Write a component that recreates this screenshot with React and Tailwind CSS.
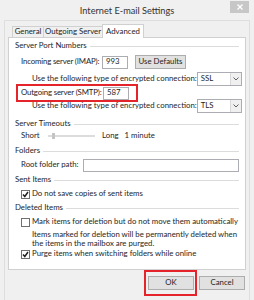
import { useState } from "react";

const font = { fontFamily: "Lato, 'Liberation Sans', sans-serif" };

// Section header with a rule running to the right edge
function Section({ title, className = "" }) {
  return (
    <div className={`flex items-center h-[12px] pl-[6px] pr-[6px] ${className}`}>
      <span className="text-[7.8px] leading-none text-[#1e1e1e] whitespace-nowrap">{title}</span>
      <div className="flex-1 h-px bg-[#dcdcdc] ml-[3px]" />
    </div>
  );
}

function Field({ value, className = "" }) {
  return (
    <div className={`shrink-0 h-[13px] bg-white border border-[#abadb3] flex items-center px-[3px] text-[7.8px] leading-none ${className}`}>
      {value}
    </div>
  );
}

function Select({ value }) {
  return (
    <div className="shrink-0 ml-auto mr-[6px] w-[45px] h-[14px] bg-white border border-[#abadb3] flex items-center">
      <span className="flex-1 pl-[3px] text-[7.8px] leading-none">{value}</span>
      <div className="w-[11px] h-full bg-[#f0f0f0] border-l border-[#d9d9d9] flex items-center justify-center">
        <svg width="6" height="4" viewBox="0 0 6 4">
          <path d="M0.5 0.5 L3 3 L5.5 0.5" fill="none" stroke="#606060" strokeWidth="1" />
        </svg>
      </div>
    </div>
  );
}

function Check({ checked, label, className = "" }) {
  return (
    <div className={`flex items-center h-[12px] pl-[12px] ${className}`}>
      <div className="shrink-0 w-[9px] h-[9px] bg-white border border-[#707070] flex items-center justify-center">
        {checked && (
          <svg width="7" height="7" viewBox="0 0 7 7">
            <path d="M1 3.5 L2.8 5.5 L6 1" fill="none" stroke="#222" strokeWidth="1.5" />
          </svg>
        )}
      </div>
      <span className="ml-[2px] text-[7.8px] leading-none whitespace-nowrap">{label}</span>
    </div>
  );
}

function Button({ children, className = "" }) {
  return (
    <div className={`shrink-0 w-[46px] h-[14px] bg-[#e1e1e1] border border-[#adadad] flex items-center justify-center text-[7.8px] leading-none ${className}`}>
      {children}
    </div>
  );
}

export default function App() {
  const [tab] = useState("Advanced");
  const tabs = [
    { name: "General", w: "w-[32px]" },
    { name: "Outgoing Server", w: "w-[60px]" },
    { name: "Advanced", w: "w-[42px]" },
  ];

  return (
    <div className="w-[254px] h-[300px] bg-[#f0f0f0] overflow-hidden text-[#1e1e1e]" style={font}>
      {/* title bar */}
      <div className="relative h-[20px] flex items-center justify-center">
        <span className="text-[9.2px] text-[#333] leading-none mt-[1px]">Internet E-mail Settings</span>
        <div className="absolute right-[5px] top-[1px] w-[19px] h-[12px] bg-[#c7c7c7] flex items-center justify-center">
          <svg width="6" height="6" viewBox="0 0 6 6">
            <path d="M0.5 0.5 L5.5 5.5 M5.5 0.5 L0.5 5.5" stroke="#fff" strokeWidth="1.3" />
          </svg>
        </div>
      </div>

      {/* client area */}
      <div className="mx-[4px] h-[290px] border border-[#dedede] bg-[#f0f0f0]">
        {/* tabs */}
        <div className="flex items-end h-[16px] pl-[7px]">
          {tabs.map((t) =>
            t.name === tab ? (
              <div key={t.name} className={`${t.w} h-[14px] -mb-px z-10 bg-white border border-b-0 border-[#d0d0d0] flex items-center justify-center text-[7.8px] leading-none`}>
                {t.name}
              </div>
            ) : (
              <div key={t.name} className={`${t.w} h-[11px] bg-[#f0f0f0] border border-b-0 border-[#d0d0d0] -mr-px flex items-center justify-center text-[7.8px] leading-none`}>
                {t.name}
              </div>
            )
          )}
        </div>

        {/* tab page */}
        <div className="mx-[3px] h-[233px] bg-white border border-[#d0d0d0]">
          <Section title="Server Port Numbers" className="mt-[2px]" />

          <div className="flex items-center h-[14px] mt-[3px] pl-[12px]">
            <span className="shrink-0 w-[81px] text-[7.8px] tracking-[-0.15px] leading-none whitespace-nowrap">Incoming server (IMAP):</span>
            <Field value="993" className="w-[26px]" />
            <Button className="ml-[7px] w-[51px]">Use Defaults</Button>
          </div>

          <div className="flex items-center h-[14px] mt-[3px] pl-[23px]">
            <span className="text-[7.8px] leading-none whitespace-nowrap">Use the following type of encrypted connection:</span>
            <Select value="SSL" />
          </div>

          <div className="flex items-center h-[12px] mt-px pl-[7px]">
            <div className="flex items-center h-[18px] border-2 border-[#e5232a] pl-[3px] pr-[7px]">
              <span className="shrink-0 w-[82px] text-[7.8px] tracking-[-0.15px] leading-none whitespace-nowrap">Outgoing server (SMTP):</span>
              <Field value="587" className="w-[26px]" />
            </div>
          </div>

          <div className="flex items-center h-[14px] pl-[23px]">
            <span className="text-[7.8px] leading-none whitespace-nowrap">Use the following type of encrypted connection:</span>
            <Select value="TLS" />
          </div>

          <Section title="Server Timeouts" className="mt-[5px]" />

          <div className="flex items-center h-[12px] pl-[12px] text-[7.8px] leading-none">
            <span className="w-[27px]">Short</span>
            <div className="relative w-[47px] h-[2px] bg-[#dcdcdc]">
              <div className="absolute left-[4px] -top-[2px] w-[3px] h-[6px] bg-[#c4c4c4]" />
            </div>
            <span className="ml-[7px]">Long</span>
            <span className="ml-[6px]">1 minute</span>
          </div>

          <Section title="Folders" className="mt-[3px]" />

          <div className="flex items-center h-[12px] mt-[2px] pl-[12px]">
            <span className="shrink-0 w-[62px] text-[7.8px] leading-none whitespace-nowrap">Root folder path:</span>
            <Field value="" className="flex-1 mr-[6px] h-[12px]" />
          </div>

          <Section title="Sent Items" className="mt-[3px]" />
          <Check checked label="Do not save copies of sent items" className="mt-[2px]" />

          <Section title="Deleted Items" className="mt-[2px]" />
          <Check label="Mark items for deletion but do not move them automatically" className="mt-[2px]" />

          <div className="mt-[2px] pl-[23px] text-[7.8px] leading-[9px] whitespace-nowrap">
            <div>Items marked for deletion will be permanently deleted when</div>
            <div>the items in the mailbox are purged.</div>
          </div>

          <Check checked label="Purge items when switching folders while online" />
        </div>

        {/* buttons */}
        <div className="flex items-start justify-end pr-[4px] gap-[2px]">
          <div className="border-2 border-[#e5232a] pl-[2px] pr-[1px] py-[4px]">
            <Button>OK</Button>
          </div>
          <Button className="mt-[6px]">Cancel</Button>
        </div>
      </div>
    </div>
  );
}
